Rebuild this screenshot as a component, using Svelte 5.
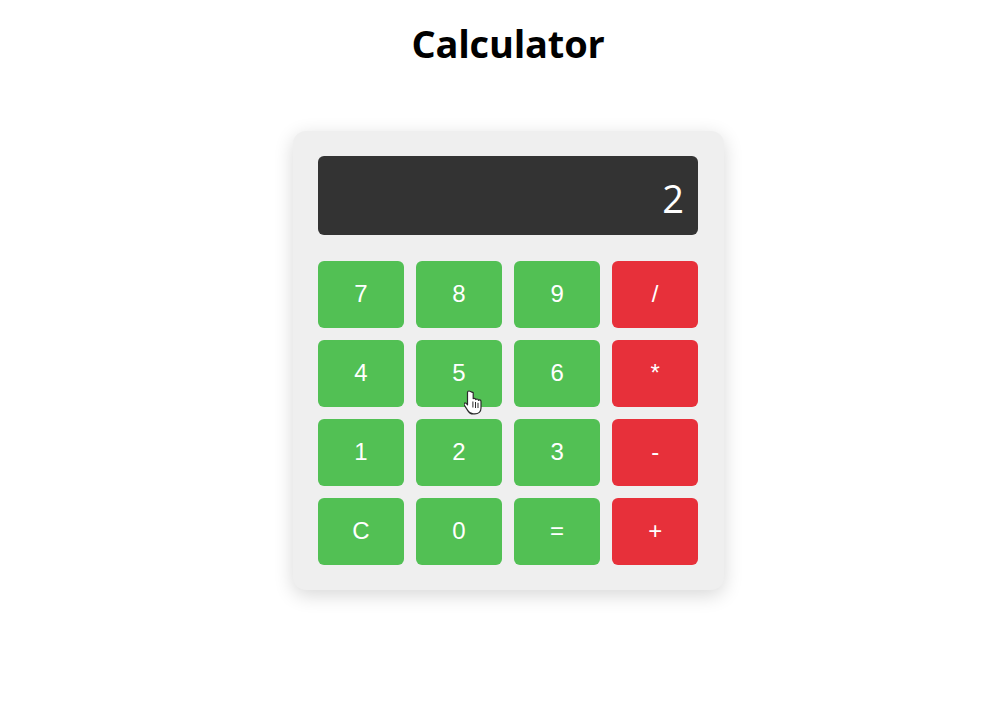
<script>
  const keys = ['7','8','9','/','4','5','6','*','1','2','3','-','C','0','=','+'];
  const isOp = (k) => '/*-+'.includes(k);
</script>

<main class="page">
  <h1>Calculator</h1>
  <section class="calc">
    <div class="display">2</div>
    <div class="keys">
      {#each keys as k}
        <button class="key" class:op={isOp(k)}>{k}</button>
      {/each}
    </div>
    <svg class="cursor" width="18" height="26" viewBox="0 0 18 26" aria-hidden="true">
      <path d="M5 1c-.9 0-1.500.7-1.500 1.600v12.200l-1-1.200c-.7-.8-1.700-.8-2.200-.2-.4.5-.3 1.200.1 1.800l3.400 5.400c1.200 2.100 2.900 3.300 5.400 3.300h1.600c3.600 0 6.200-2.400 6.200-6v-6.500c0-.9-.6-1.500-1.400-1.500-.4 0-.8.1-1.100.4-.2-.8-.8-1.300-1.500-1.300-.5 0-.9.2-1.200.5-.2-.7-.8-1.200-1.500-1.200-.4 0-.8.1-1.100.4V2.600C6.500 1.700 5.900 1 5 1z" fill="#fff" stroke="#2a2a2a" stroke-width="1.200" stroke-linejoin="round"/>
      <path d="M8.900 11.500v6M11.500 12v6M14 12.800v5.200" fill="none" stroke="#2a2a2a" stroke-width="1"/>
    </svg>
  </section>
</main>

<style>
  :global(body) {
    margin: 0;
    background: #fff;
  }
  .page {
    display: flex;
    flex-direction: column;
    align-items: center;
    box-sizing: border-box;
    height: 720px;
    padding-left: 8px;
    overflow: hidden;
  }
  h1 {
    margin: 19px 0 0;
    font: 700 38px/48px "Open Sans", sans-serif;
    color: #000;
    letter-spacing: -0.2px;
  }
  .calc {
    position: relative;
    box-sizing: border-box;
    width: 431px;
    height: 459px;
    margin-top: 64px;
    padding: 25px 25.500px;
    background: #efefef;
    border-radius: 13px;
    box-shadow: 0 5px 19px rgba(0, 0, 0, 0.16);
  }
  .display {
    box-sizing: border-box;
    height: 79px;
    padding: 0 14px 0 0;
    background: #333;
    border-radius: 6px;
    color: #fff;
    font: 400 38px/84px "Open Sans", sans-serif;
    text-align: right;
  }
  .keys {
    display: grid;
    grid-template-columns: repeat(4, 1fr);
    grid-auto-rows: 67px;
    gap: 12px 12.500px;
    margin-top: 26px;
  }
  .key {
    border: 0;
    padding: 0 0 2px;
    background: #52c054;
    border-radius: 6px;
    color: #fff;
    font: 400 24px "Liberation Sans", Arial, sans-serif;
  }
  .key.op {
    background: #e7303a;
  }
  .cursor {
    position: absolute;
    left: 171px;
    top: 259px;
  }
</style>
